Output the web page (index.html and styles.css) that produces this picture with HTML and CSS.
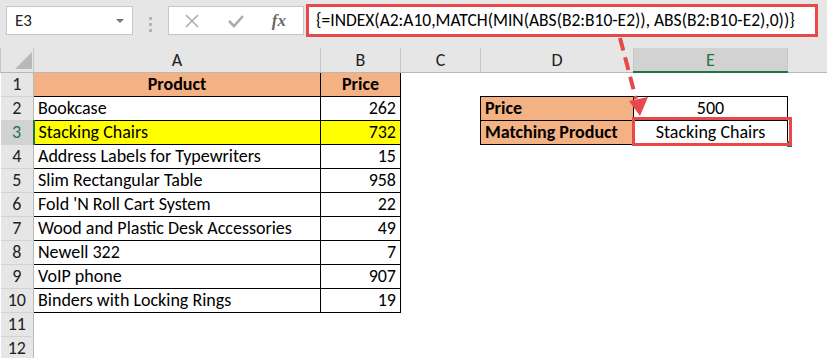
FILE: index.html
```html
<!DOCTYPE html>
<html lang="en">
<head>
  <meta charset="UTF-8">
  <title>Closest Match Lookup</title>
  <link rel="stylesheet" href="styles.css">
</head>
<body>

  <div class="window">

    <div class="toolbar">
      <div class="namebox">
        <span>E3</span>
        <span class="caret"></span>
      </div>
      <div class="grip"><i></i><i></i><i></i></div>
      <div class="fx-buttons">
        <svg width="16" height="16" viewBox="0 0 16 16"><path d="M2 2 L14 14 M14 2 L2 14" stroke="#adadad" stroke-width="1.6" fill="none"/></svg>
        <svg width="18" height="16" viewBox="0 0 18 16"><path d="M2 8 L7 13 L16 3" stroke="#adadad" stroke-width="2.6" fill="none"/></svg>
        <span class="fx">fx</span>
      </div>
      <div class="formula">{=INDEX(A2:A10,MATCH(MIN(ABS(B2:B10-E2)), ABS(B2:B10-E2),0))}</div>
    </div>

    <table class="grid">
      <colgroup>
        <col class="c-head">
        <col class="c-a">
        <col class="c-b">
        <col class="c-c">
        <col class="c-d">
        <col class="c-e">
        <col class="c-f">
      </colgroup>
      <tr class="col-heads">
        <th class="corner"><span class="tri"></span></th>
        <th>A</th>
        <th>B</th>
        <th>C</th>
        <th>D</th>
        <th class="sel">E</th>
        <th class="last"></th>
      </tr>
      <tr>
        <th class="rh">1</th>
        <td class="bd fill head">Product</td>
        <td class="bd fill head">Price</td>
        <td></td><td></td><td></td><td></td>
      </tr>
      <tr>
        <th class="rh">2</th>
        <td class="bd">Bookcase</td>
        <td class="bd num">262</td>
        <td></td>
        <td class="bd fill label">Price</td>
        <td class="bd mid">500</td>
        <td></td>
      </tr>
      <tr>
        <th class="rh sel">3</th>
        <td class="bd hl">Stacking Chairs</td>
        <td class="bd hl num">732</td>
        <td></td>
        <td class="bd fill label">Matching Product</td>
        <td class="bd mid">Stacking Chairs</td>
        <td></td>
      </tr>
      <tr>
        <th class="rh">4</th>
        <td class="bd">Address Labels for Typewriters</td>
        <td class="bd num">15</td>
        <td></td><td></td><td></td><td></td>
      </tr>
      <tr>
        <th class="rh">5</th>
        <td class="bd">Slim Rectangular Table</td>
        <td class="bd num">958</td>
        <td></td><td></td><td></td><td></td>
      </tr>
      <tr>
        <th class="rh">6</th>
        <td class="bd">Fold 'N Roll Cart System</td>
        <td class="bd num">22</td>
        <td></td><td></td><td></td><td></td>
      </tr>
      <tr>
        <th class="rh">7</th>
        <td class="bd">Wood and Plastic Desk Accessories</td>
        <td class="bd num">49</td>
        <td></td><td></td><td></td><td></td>
      </tr>
      <tr>
        <th class="rh">8</th>
        <td class="bd">Newell 322</td>
        <td class="bd num">7</td>
        <td></td><td></td><td></td><td></td>
      </tr>
      <tr>
        <th class="rh">9</th>
        <td class="bd">VoIP phone</td>
        <td class="bd num">907</td>
        <td></td><td></td><td></td><td></td>
      </tr>
      <tr>
        <th class="rh">10</th>
        <td class="bd">Binders with Locking Rings</td>
        <td class="bd num">19</td>
        <td></td><td></td><td></td><td></td>
      </tr>
      <tr>
        <th class="rh">11</th>
        <td></td><td></td><td></td><td></td><td></td><td></td>
      </tr>
      <tr>
        <th class="rh">12</th>
        <td></td><td></td><td></td><td></td><td></td><td></td>
      </tr>
    </table>

    <!-- annotation marks drawn over the sheet -->
    <svg class="marks" width="827" height="358" viewBox="0 0 827 358">
      <line x1="620" y1="38" x2="636" y2="99" stroke="#e8484a" stroke-width="4" stroke-dasharray="13 7"/>
      <polygon points="629,101 648,97 640,116" fill="#e8484a"/>
      <rect x="787" y="141" width="5" height="6" fill="#217346"/>
      <rect x="633.5" y="118.5" width="157" height="26" fill="none" stroke="#e8484a" stroke-width="3"/>
    </svg>

  </div>

</body>
</html>
```

FILE: styles.css
```css
body {
  margin: 0;
  background: #fff;
  font-family: Carlito, Lato, sans-serif;
}
.window {
  position: relative;
  width: 827px;
  height: 358px;
  overflow: hidden;
}
.toolbar {
  display: flex;
  align-items: flex-start;
  height: 48px;
  padding-top: 4px;
  box-sizing: border-box;
  background: #e6e6e6;
}
.namebox {
  display: flex;
  align-items: center;
  justify-content: space-between;
  width: 127px;
  height: 29px;
  margin: 2px 0 0 6px;
  padding: 0 8px 0 8px;
  box-sizing: border-box;
  background: #fff;
  border: 1px solid #c6c6c6;
  font-size: 17px;
  color: #222;
}
.caret {
  width: 0;
  height: 0;
  border-left: 4px solid transparent;
  border-right: 4px solid transparent;
  border-top: 4px solid #777;
}
.grip {
  display: flex;
  flex-direction: column;
  gap: 3px;
  margin: 13px 0 0 16px;
}
.grip i {
  display: block;
  width: 3px;
  height: 3px;
  background: #b4b4b4;
}
.fx-buttons {
  display: flex;
  align-items: center;
  justify-content: space-between;
  width: 136px;
  height: 29px;
  margin: 2px 0 0 16px;
  padding: 0 17px 0 15px;
  box-sizing: border-box;
  background: #fff;
  border: 1px solid #c6c6c6;
}
.fx {
  font-family: "Liberation Serif", serif;
  font-style: italic;
  font-weight: bold;
  font-size: 17px;
  color: #6a6a6a;
}
.formula {
  width: 512px;
  height: 33px;
  margin-left: 2px;
  padding-left: 7px;
  box-sizing: border-box;
  background: #fff;
  border: 3px solid #e8484a;
  font-size: 17.5px;
  line-height: 27px;
  color: #000;
  white-space: nowrap;
}
.grid {
  border-collapse: collapse;
  table-layout: fixed;
  width: 827px;
  font-size: 18px;
  color: #000;
}
.c-head { width: 33px; }
.c-a { width: 287px; }
.c-b { width: 80px; }
.c-c { width: 80px; }
.c-d { width: 153px; }
.c-e { width: 154px; }
.c-f { width: 40px; }
.grid tr {
  height: 24px;
}
.grid td {
  padding: 0 4px;
  line-height: 22px;
  white-space: nowrap;
  overflow: hidden;
}
.grid th {
  font-weight: normal;
  line-height: 22px;
  color: #222;
  background: #e6e6e6;
  padding: 0;
}
.col-heads {
  height: 23px;
}
.col-heads th {
  border-left: 1px solid #c8c8c8;
  border-bottom: 1px solid #b8b8b8;
}
.col-heads th.sel {
  background: #d2d2d2;
  color: #217346;
  border-bottom: 2px solid #217346;
}
.col-heads th.last {
  border-left: 1px solid #c8c8c8;
}
.corner {
  position: relative;
}
.tri {
  position: absolute;
  right: 1px;
  bottom: 3px;
  width: 0;
  height: 0;
  border-left: 17px solid transparent;
  border-bottom: 17px solid #b8b8b8;
}
.rh {
  border-right: 1px solid #b8b8b8;
  border-bottom: 1px solid #d2d2d2;
}
.rh.sel {
  background: #d2d2d2;
  color: #217346;
  border-right: 2px solid #217346;
}
.bd {
  border: 1px solid #000;
}
.fill {
  background: #f4b183;
}
.head {
  text-align: center;
  font-weight: bold;
}
.label {
  font-weight: bold;
}
.hl {
  background: #ffff00;
}
.num {
  text-align: right;
}
.mid {
  text-align: center;
}
.marks {
  position: absolute;
  top: 0;
  left: 0;
  pointer-events: none;
}
```
